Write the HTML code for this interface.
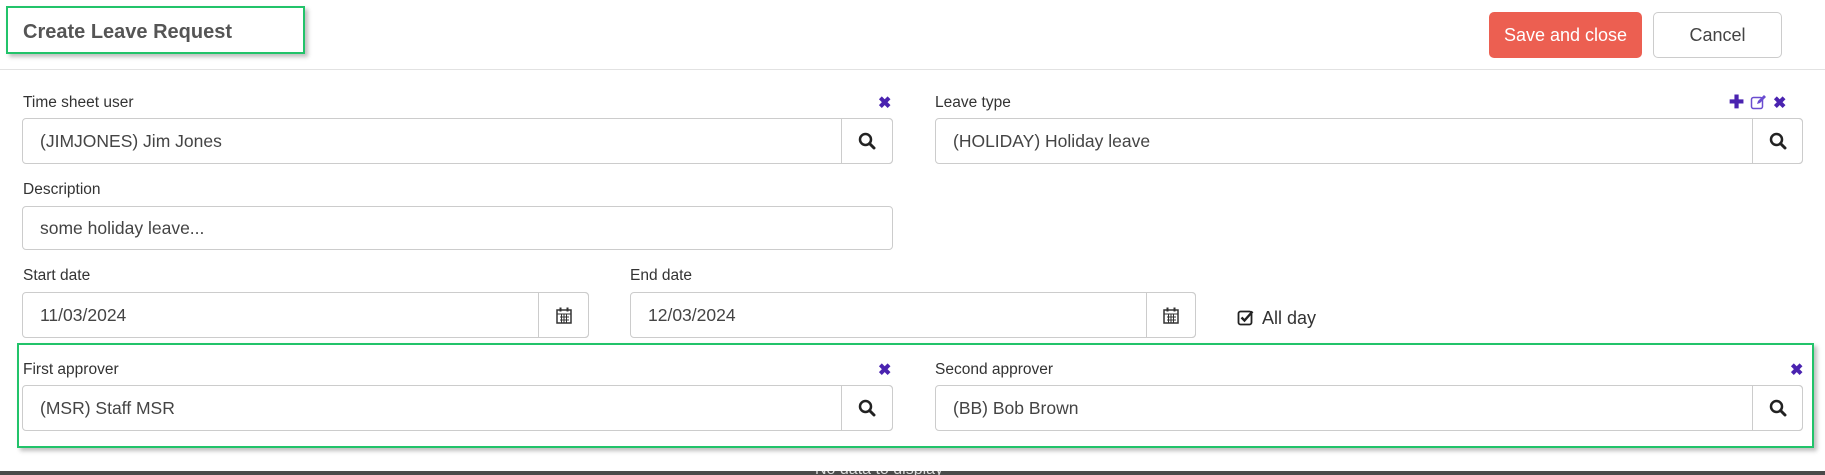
<!DOCTYPE html>
<html><head><style>
*{box-sizing:border-box;margin:0;padding:0}
body{width:1825px;height:475px;background:#fff;font-family:"Liberation Sans",sans-serif;position:relative;overflow:hidden;color:#333}
.a{position:absolute}
.lbl{position:absolute;font-size:15.5px;color:#333}
.inp{position:absolute;border:1px solid #ccc;border-radius:4px;background:#fff;font-size:17.5px;color:#444;padding-left:17px;display:flex;align-items:center}
.btn{position:absolute;top:-1px;bottom:-1px;right:-1px;border:1px solid #ccc;border-radius:0 4px 4px 0;display:flex;align-items:center;justify-content:center}
.x{position:absolute;color:#4a23b0;font-weight:bold;font-size:16px}
</style></head><body>
<div class="a" style="left:6px;top:6px;width:299px;height:48px;border:2px solid #22c36a;box-shadow:3px 3px 4px rgba(0,0,0,.25)"></div>
<div class="a" style="left:23px;top:21px;font-size:20px;font-weight:bold;color:#555">Create Leave Request</div>
<div class="a" style="left:1489px;top:12px;width:153px;height:46px;background:#ec5f51;border-radius:5px;color:#fff;font-size:18px;display:flex;align-items:center;justify-content:center">Save and close</div>
<div class="a" style="left:1653px;top:12px;width:129px;height:46px;border:1px solid #ccc;border-radius:5px;color:#444;font-size:18px;display:flex;align-items:center;justify-content:center">Cancel</div>
<div class="a" style="left:0;top:69px;width:1825px;height:1px;background:#e2e2e2"></div>

<div class="lbl" style="left:23px;top:94px">Time sheet user</div>
<div class="x" style="left:878px;top:93px">✖</div>
<div class="inp" style="left:22px;top:118px;width:871px;height:46px">(JIMJONES) Jim Jones<div class="btn" style="width:52px"><svg width="18" height="18" viewBox="0 0 18 18"><circle cx="7.5" cy="7.5" r="5.5" fill="none" stroke="#222" stroke-width="2.5"/><path d="M11.5 11.5L16 16" stroke="#222" stroke-width="3" stroke-linecap="round"/></svg></div></div>

<div class="lbl" style="left:935px;top:94px">Leave type</div>
<div class="x" style="left:1729px;top:92px;font-size:18px">✚</div>
<svg class="a" style="left:1750px;top:94px" width="16" height="16" viewBox="0 0 16 16"><rect x="1.5" y="3.5" width="11" height="11" rx="2" fill="none" stroke="#6a4cd0" stroke-width="1.5"/><path d="M7 10l1-3 6-6 2 2-6 6z" fill="#6a4cd0"/></svg>
<div class="x" style="left:1773px;top:93px">✖</div>
<div class="inp" style="left:935px;top:118px;width:868px;height:46px">(HOLIDAY) Holiday leave<div class="btn" style="width:51px"><svg width="18" height="18" viewBox="0 0 18 18"><circle cx="7.5" cy="7.5" r="5.5" fill="none" stroke="#222" stroke-width="2.5"/><path d="M11.5 11.5L16 16" stroke="#222" stroke-width="3" stroke-linecap="round"/></svg></div></div>

<div class="lbl" style="left:23px;top:181px">Description</div>
<div class="inp" style="left:22px;top:206px;width:871px;height:44px">some holiday leave...</div>

<div class="lbl" style="left:23px;top:267px">Start date</div>
<div class="inp" style="left:22px;top:292px;width:567px;height:46px">11/03/2024<div class="btn" style="width:51px"><svg width="16" height="17" viewBox="0 0 16 17"><rect x="1" y="3" width="14" height="13" fill="none" stroke="#333" stroke-width="1.5"/><path d="M1 7h14M4 10h9M4 13h9M5.5 7v9M8 7v9M10.5 7v9" stroke="#333" stroke-width="1"/><rect x="3.5" y="0.5" width="2" height="4" fill="#333"/><rect x="10.5" y="0.5" width="2" height="4" fill="#333"/></svg></div></div>
<div class="lbl" style="left:630px;top:267px">End date</div>
<div class="inp" style="left:630px;top:292px;width:566px;height:46px">12/03/2024<div class="btn" style="width:50px"><svg width="16" height="17" viewBox="0 0 16 17"><rect x="1" y="3" width="14" height="13" fill="none" stroke="#333" stroke-width="1.5"/><path d="M1 7h14M4 10h9M4 13h9M5.5 7v9M8 7v9M10.5 7v9" stroke="#333" stroke-width="1"/><rect x="3.5" y="0.5" width="2" height="4" fill="#333"/><rect x="10.5" y="0.5" width="2" height="4" fill="#333"/></svg></div></div>
<svg class="a" style="left:1237px;top:309px" width="18" height="18" viewBox="0 0 18 18"><rect x="1.5" y="2.5" width="13" height="13" rx="2" fill="none" stroke="#222" stroke-width="1.8"/><path d="M4.5 8.5l3 3 8-9" fill="none" stroke="#222" stroke-width="2.4"/></svg>
<div class="a" style="left:1262px;top:308px;font-size:18px;color:#333">All day</div>

<div class="a" style="left:17px;top:343px;width:1797px;height:105px;border:2px solid #22c36a;box-shadow:3px 3px 4px rgba(0,0,0,.25)"></div>
<div class="lbl" style="left:23px;top:361px">First approver</div>
<div class="x" style="left:878px;top:360px">✖</div>
<div class="inp" style="left:22px;top:385px;width:871px;height:46px">(MSR) Staff MSR<div class="btn" style="width:52px"><svg width="18" height="18" viewBox="0 0 18 18"><circle cx="7.5" cy="7.5" r="5.5" fill="none" stroke="#222" stroke-width="2.5"/><path d="M11.5 11.5L16 16" stroke="#222" stroke-width="3" stroke-linecap="round"/></svg></div></div>
<div class="lbl" style="left:935px;top:361px">Second approver</div>
<div class="x" style="left:1790px;top:360px">✖</div>
<div class="inp" style="left:935px;top:385px;width:868px;height:46px">(BB) Bob Brown<div class="btn" style="width:51px"><svg width="18" height="18" viewBox="0 0 18 18"><circle cx="7.5" cy="7.5" r="5.5" fill="none" stroke="#222" stroke-width="2.5"/><path d="M11.5 11.5L16 16" stroke="#222" stroke-width="3" stroke-linecap="round"/></svg></div></div>

<div class="a" style="left:0;top:471px;width:1825px;height:4px;background:#4a4a4a;overflow:hidden"><div style="position:absolute;left:815px;top:-10px;font-size:16px;color:#ddd">No data to display</div></div>
</body></html>
